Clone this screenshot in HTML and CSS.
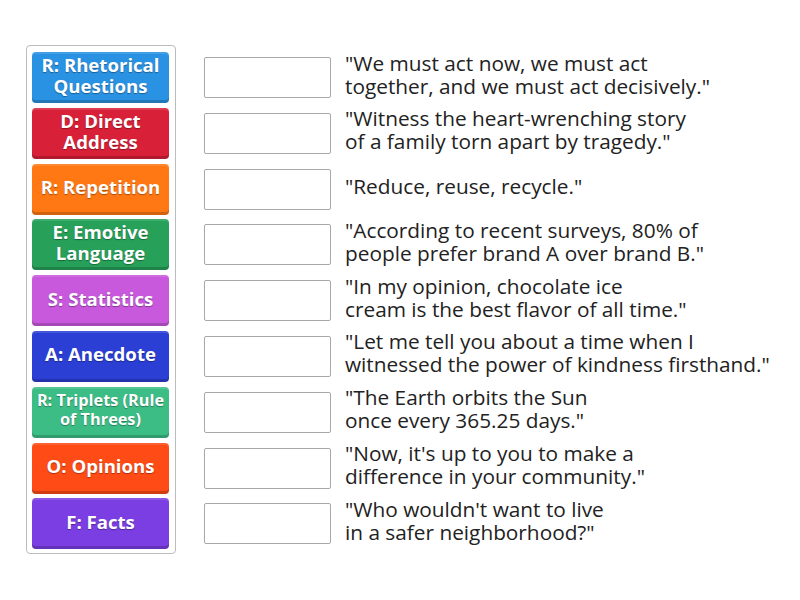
FILE: index.html
```html
<!DOCTYPE html>
<html>
<head>
<meta charset="utf-8">
<link rel="stylesheet" href="styles.css">
</head>
<body>
<div class="page">
  <div class="bank">
    <div class="tile blue">R: Rhetorical Questions</div>
    <div class="tile red">D: Direct Address</div>
    <div class="tile orange">R: Repetition</div>
    <div class="tile green">E: Emotive Language</div>
    <div class="tile violet">S: Statistics</div>
    <div class="tile navy">A: Anecdote</div>
    <div class="tile teal small">R: Triplets (Rule of Threes)</div>
    <div class="tile vermilion">O: Opinions</div>
    <div class="tile purple">F: Facts</div>
  </div>
  <div class="rows">
    <div class="row"><div class="slot"></div><div class="quote">"We must act now, we must act<br>together, and we must act decisively."</div></div>
    <div class="row"><div class="slot"></div><div class="quote">"Witness the heart-wrenching story<br>of a family torn apart by tragedy."</div></div>
    <div class="row"><div class="slot"></div><div class="quote">"Reduce, reuse, recycle."</div></div>
    <div class="row"><div class="slot"></div><div class="quote">"According to recent surveys, 80% of<br>people prefer brand A over brand B."</div></div>
    <div class="row"><div class="slot"></div><div class="quote">"In my opinion, chocolate ice<br>cream is the best flavor of all time."</div></div>
    <div class="row"><div class="slot"></div><div class="quote">"Let me tell you about a time when I<br>witnessed the power of kindness firsthand."</div></div>
    <div class="row"><div class="slot"></div><div class="quote">"The Earth orbits the Sun<br>once every 365.25 days."</div></div>
    <div class="row"><div class="slot"></div><div class="quote">"Now, it's up to you to make a<br>difference in your community."</div></div>
    <div class="row"><div class="slot"></div><div class="quote">"Who wouldn't want to live<br>in a safer neighborhood?"</div></div>
  </div>
</div>
</body>
</html>
```
FILE: styles.css
```css
html, body {
  margin: 0;
  padding: 0;
  background: #fff;
  font-family: "Open Sans", "Liberation Sans", sans-serif;
}
.page {
  display: flex;
  align-items: flex-start;
  padding: 45px 0 0 26px;
}
.bank {
  width: 137px;
  padding: 6px 6px 4px 5px;
  border: 1px solid #bcbcbc;
  border-radius: 4px;
  display: flex;
  flex-direction: column;
  gap: 4.8px;
}
.tile {
  height: 51px;
  border-radius: 4px;
  display: flex;
  align-items: center;
  justify-content: center;
  text-align: center;
  color: #fff;
  font-weight: 700;
  font-size: 18.6px;
  line-height: 21px;
  padding: 0 2px 5px;
  box-sizing: border-box;
  text-shadow: 0 1px 1px rgba(0,0,0,0.35);
  box-shadow: inset 0 -3px 0 rgba(0,0,0,0.18), inset 0 2px 0 rgba(255,255,255,0.12);
}
.tile.small {
  font-size: 16.3px;
  line-height: 19px;
  padding: 0 1px 4px;
}
.blue { background: #2a92e2; }
.red { background: #d82038; }
.orange { background: #ff7814; }
.green { background: #27a05a; }
.violet { background: #c858dc; }
.navy { background: #2b3fd4; }
.teal { background: #3dbd86; }
.vermilion { background: #ff4b16; }
.purple { background: #7b3ee2; }
.rows {
  display: flex;
  flex-direction: column;
  gap: 4.8px;
  padding-top: 7px;
  margin-left: 28px;
}
.row {
  height: 51px;
  display: flex;
  align-items: center;
}
.slot {
  width: 125px;
  height: 39px;
  border: 1px solid #a8a8a8;
  border-radius: 2px;
  background: #fff;
  flex: none;
}
.quote {
  margin-left: 14px;
  padding-bottom: 6px;
  font-size: 20.8px;
  line-height: 23px;
  color: #222;
  white-space: nowrap;
}
```
